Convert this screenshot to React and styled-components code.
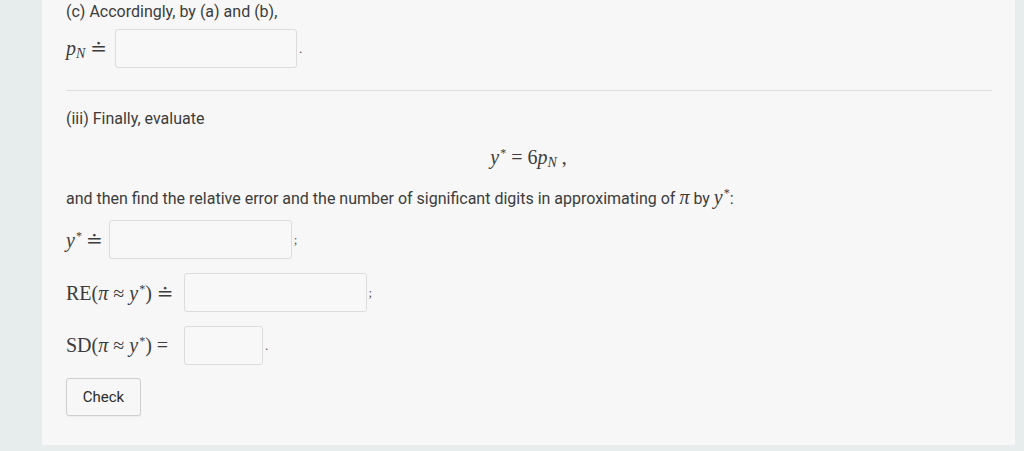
import styled, { createGlobalStyle } from "styled-components";

const Global = createGlobalStyle`
  html, body {
    margin: 0;
    padding: 0;
    background: #e7ecec;
    overflow: hidden;
  }
`;

const Page = styled.div`
  width: 1024px;
  height: 451px;
  padding-left: 42px;
  box-sizing: border-box;
  overflow: hidden;
`;

const Card = styled.div`
  width: 973px;
  height: 445px;
  background: #f7f7f7;
  box-sizing: border-box;
  padding: 0 24px;
  font-family: Roboto, "Liberation Sans", sans-serif;
  font-size: 16px;
  color: #3c3c3c;
  display: flex;
  flex-direction: column;
`;

const Para = styled.div`
  line-height: 20px;
  margin-top: ${(p) => p.top || 0}px;
`;

const Row = styled.div`
  display: flex;
  align-items: center;
  margin-top: ${(p) => p.top || 0}px;
`;

const Math = styled.span`
  font-family: "Liberation Serif", "DejaVu Serif", serif;
  font-size: 20px;
  color: #3c3c3c;
  white-space: nowrap;
`;

const I = styled.i`
  font-style: italic;
`;

const Sub = styled.sub`
  font-size: 14px;
  font-style: italic;
  vertical-align: -3px;
`;

const Sup = styled.sup`
  font-size: 12px;
  vertical-align: 7px;
  margin-left: 1px;
`;

const Rel = styled.span`
  margin: 0 ${(p) => p.gap ?? 5}px;
`;

const Input = styled.div`
  width: ${(p) => p.w}px;
  height: 39px;
  box-sizing: border-box;
  border: 1px solid #dcdcdc;
  border-radius: 3px;
  background: #f8f8f8;
  margin-left: ${(p) => p.left || 0}px;
`;

const Punct = styled.span`
  font-family: "Liberation Serif", serif;
  font-size: 13px;
  color: #555;
  margin-left: 2px;
`;

const Divider = styled.hr`
  border: none;
  border-top: 1px solid #dedede;
  margin: 22px 0 0 0;
  width: 926px;
`;

const Display = styled.div`
  text-align: center;
  margin-top: 17px;
`;

const Button = styled.button`
  width: 75px;
  height: 38px;
  border: 1px solid #cfcfcf;
  border-radius: 3px;
  background: #f7f7f7;
  font-family: Roboto, "Liberation Sans", sans-serif;
  font-size: 15px;
  color: #2c2c2c;
  margin-top: 13px;
  box-shadow: 0 1px 1px rgba(0, 0, 0, 0.05);
`;

const Star = () => <Sup>*</Sup>;

export default function App() {
  return (
    <Page>
      <Global />
      <Card>
        <Para top={2}>(c) Accordingly, by (a) and (b),</Para>
        <Row top={7}>
          <Math>
            <I>p</I>
            <Sub>N</Sub>
            <Rel>≐</Rel>
          </Math>
          <Input w={182} left={3} />
          <Punct>.</Punct>
        </Row>
        <Divider />
        <Para top={18}>(iii) Finally, evaluate</Para>
        <Display>
          <Math>
            <I>y</I>
            <Star />
            <Rel>=</Rel>6<I>p</I>
            <Sub>N</Sub> ,
          </Math>
        </Display>
        <Para top={12}>
          and then find the relative error and the number of significant digits in approximating of{" "}
          <Math>
            <I>π</I>
          </Math>{" "}
          by{" "}
          <Math>
            <I>y</I>
            <Star />
          </Math>
          :
        </Para>
        <Row top={11}>
          <Math>
            <I>y</I>
            <Star />
            <Rel gap={4}>≐</Rel>
          </Math>
          <Input w={183} left={2} />
          <Punct>;</Punct>
        </Row>
        <Row top={14}>
          <Math>
            RE(<I>π</I>
            <Rel>≈</Rel>
            <I>y</I>
            <Star />)<Rel>≐</Rel>
          </Math>
          <Input w={183} left={5} />
          <Punct>;</Punct>
        </Row>
        <Row top={14}>
          <Math>
            SD(<I>π</I>
            <Rel>≈</Rel>
            <I>y</I>
            <Star />)<Rel>=</Rel>
          </Math>
          <Input w={79} left={11} />
          <Punct>.</Punct>
        </Row>
        <div>
          <Button>Check</Button>
        </div>
      </Card>
    </Page>
  );
}
